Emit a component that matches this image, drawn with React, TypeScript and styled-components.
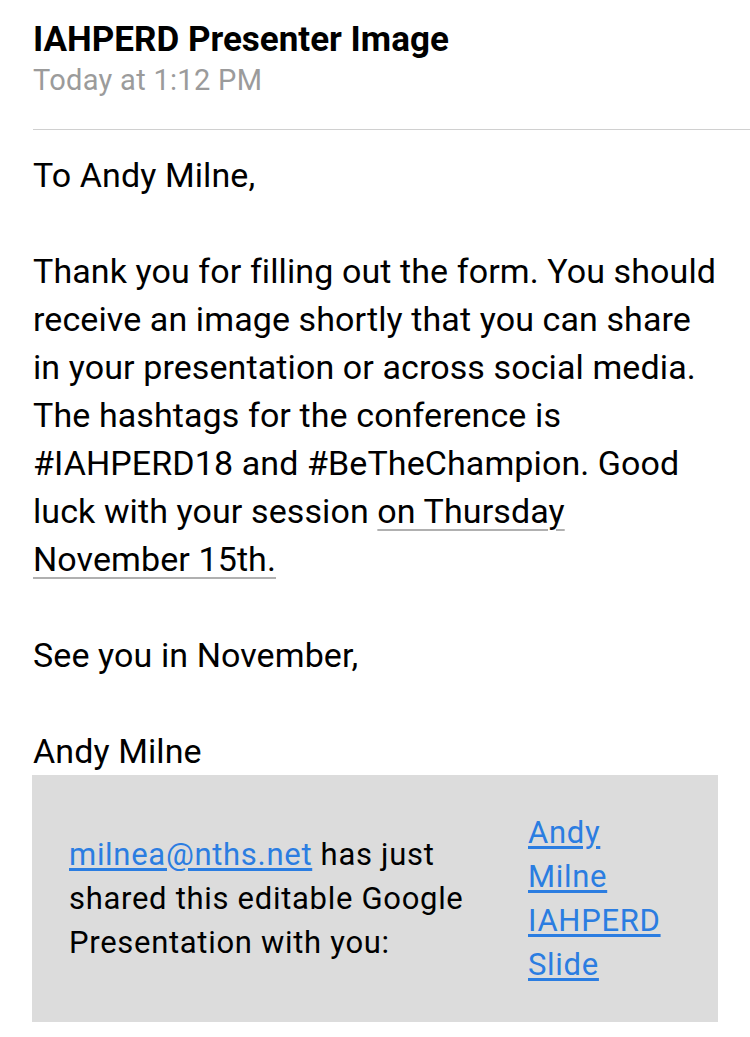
import React from "react";
import styled, { createGlobalStyle } from "styled-components";

const GlobalStyle = createGlobalStyle`
  html, body { margin: 0; padding: 0; background: #ffffff; }
  body { font-family: Roboto, "Liberation Sans", sans-serif; color: #000; -webkit-font-smoothing: antialiased; }
`;

const Page = styled.div`
  width: 750px;
  height: 1037px;
  overflow: hidden;
  background: #fff;
`;

const Header = styled.header`
  padding: 20px 0 0 33px;
`;

const Subject = styled.h1`
  margin: 0;
  font-size: 35px;
  line-height: 40px;
  font-weight: 700;
  letter-spacing: 0;
`;

const DateLine = styled.div`
  font-size: 29px;
  line-height: 40px;
  letter-spacing: 0.3px;
  color: #9b9b9b;
`;

const Divider = styled.hr`
  margin: 29px 0 0 33px;
  border: 0;
  height: 1px;
  background: #d0d0d0;
`;

const Body = styled.main`
  padding: 21px 32px 0 33px;
`;

const Para = styled.p`
  margin: 0 0 48px;
  font-size: 34px;
  line-height: 48px;
  letter-spacing: 0.1px;
  &:last-of-type { margin-bottom: 0; }
`;

const DateDetect = styled.span`
  text-decoration: underline;
  text-decoration-color: #b0b0b0;
  text-underline-offset: 6px;
  text-decoration-thickness: 2px;
`;

const ShareBox = styled.div`
  margin-left: -1px;
  width: 686px;
  height: 247px;
  box-sizing: border-box;
  background: #dcdcdc;
  padding: 0 37px;
  display: flex;
  align-items: center;
  gap: 39px;
  font-size: 31px;
  line-height: 44px;
  letter-spacing: 0.7px;
`;

const ShareText = styled.div`
  width: 420px;
`;

const ShareLinks = styled.div`
  width: 145px;
`;

const Link = styled.a`
  color: #2b7de1;
  text-decoration: underline;
  text-underline-offset: 3px;
`;

export default function App() {
  return (
    <Page>
      <GlobalStyle />
      <Header>
        <Subject>IAHPERD Presenter Image</Subject>
        <DateLine>Today at 1:12 PM</DateLine>
      </Header>
      <Divider />
      <Body>
        <Para>To Andy Milne,</Para>
        <Para>
          Thank you for filling out the form. You should receive an image shortly that you can share in
          your presentation or across social media. The hashtags for the conference is #IAHPERD18 and
          #BeTheChampion. Good luck with your session <DateDetect>on Thursday November 15th.</DateDetect>
        </Para>
        <Para>See you in November,</Para>
        <Para>Andy Milne</Para>
        <ShareBox>
          <ShareText>
            <Link href="#">milnea@nths.net</Link> has just shared this editable Google Presentation with you:
          </ShareText>
          <ShareLinks>
            <Link href="#">Andy Milne IAHPERD Slide</Link>
          </ShareLinks>
        </ShareBox>
      </Body>
    </Page>
  );
}
